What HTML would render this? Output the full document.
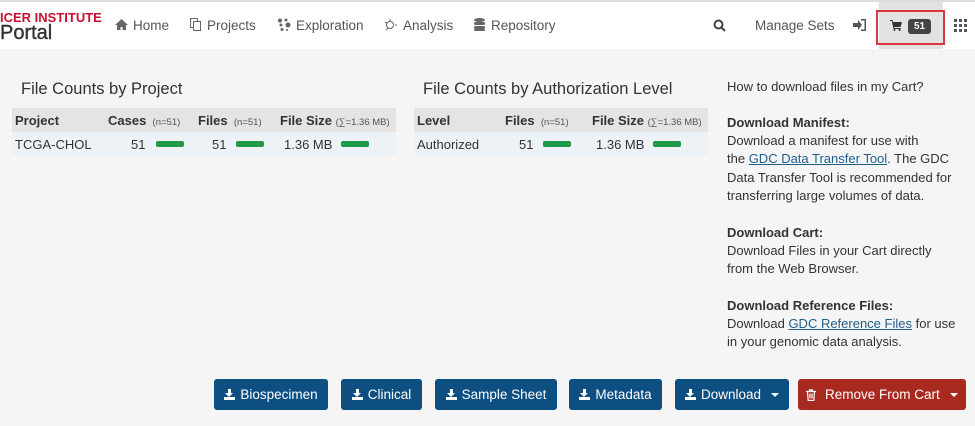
<!DOCTYPE html>
<html><head><meta charset="utf-8"><style>
*{margin:0;padding:0;box-sizing:border-box}
body{width:975px;height:426px;background:#f5f5f5;font-family:"Liberation Sans",sans-serif;position:relative;overflow:hidden;color:#333}
.a{position:absolute;white-space:nowrap}
#top{position:absolute;left:0;top:0;width:975px;height:49px;background:#fff;border-top:2px solid #ddd}
.nav{font-size:13.5px;color:#555;top:18px}
.hd{position:absolute;top:108px;height:24px;background:#e4e4e4}
.rw{position:absolute;top:132px;height:23px;background:#edf2f7}
.t{position:absolute;font-size:13px;white-space:nowrap}
.th{top:113px;font-weight:bold}
.td{top:137px}
.sm{font-size:9.5px;font-weight:normal;color:#555}
.bar{position:absolute;top:141px;width:28px;height:6px;background:#1f9a48;border-radius:2px}
.h2{font-size:16.5px;color:#333;top:80px}
.help{left:727px;font-size:13px;line-height:18.2px;color:#333;white-space:normal;width:236px}
.help a{color:#1f5f8b;text-decoration:underline}
.btn{position:absolute;top:379px;height:31px;background:#0d4f80;color:#fff;font-size:13.5px;border-radius:3px;display:flex;align-items:center;justify-content:center;gap:5px}
.dl{display:inline-block;width:11px;height:11px;position:relative}
.dl:before{content:"";position:absolute;left:4px;top:0;width:3px;height:6px;background:#fff}
.dl:after{content:"";position:absolute;left:1px;top:4px;border:4.5px solid transparent;border-top:4px solid #fff;border-bottom:0}
.dl i{position:absolute;left:0;bottom:0;width:11px;height:3px;background:#fff}
.car{display:inline-block;border:4px solid transparent;border-top:4px solid #fff;border-bottom:0;margin-left:5px}
</style></head><body>
<div id="top"></div>
<div class="a" style="left:0;top:10px;font-size:13px;font-weight:bold;color:#c8102e">ICER INSTITUTE</div>
<div class="a" style="left:0;top:22px;font-size:20px;color:#333;-webkit-text-stroke:0.4px #333">Portal</div>
<svg class="a" style="left:115px;top:19px" width="13" height="11"><path d="M6.5 0L0 6h2v5h3.5V8h2v3H11V6h2z" fill="#666"/></svg>
<div class="a nav" style="left:133px">Home</div>
<svg class="a" style="left:190px;top:18px" width="11" height="13"><rect x="0.5" y="0.5" width="7" height="9" fill="none" stroke="#666"/><rect x="3.5" y="3.5" width="7" height="9" fill="#fff" stroke="#666"/></svg>
<div class="a nav" style="left:207px">Projects</div>
<svg class="a" style="left:277px;top:18px" width="14" height="13" fill="#666"><circle cx="3" cy="2.5" r="2"/><circle cx="9" cy="2" r="1.5"/><circle cx="11" cy="7" r="2.5"/><circle cx="4" cy="7" r="1.5"/><circle cx="5" cy="11.5" r="1.5"/><circle cx="10" cy="12" r="1"/></svg>
<div class="a nav" style="left:296px">Exploration</div>
<svg class="a" style="left:384px;top:18px" width="14" height="13" fill="none" stroke="#666"><circle cx="6" cy="7" r="3.5"/><path d="M2 12l2-2M6 1v2M1 4l2 1M11 7h2"/></svg>
<div class="a nav" style="left:403px">Analysis</div>
<svg class="a" style="left:474px;top:18px" width="11" height="13" fill="#666"><ellipse cx="5.5" cy="2" rx="5.5" ry="2"/><rect x="0" y="4" width="11" height="3" rx="1.5"/><rect x="0" y="8" width="11" height="3" rx="1.5"/><rect x="0" y="11" width="11" height="2" rx="1"/></svg>
<div class="a nav" style="left:491px">Repository</div>
<svg class="a" style="left:713px;top:19px" width="13" height="13" fill="none" stroke="#444" stroke-width="2"><circle cx="5.5" cy="5.5" r="4"/><path d="M8.5 8.5l3.5 3.5"/></svg>
<div class="a nav" style="left:755px">Manage Sets</div>
<svg class="a" style="left:853px;top:19px" width="13" height="12" fill="#555"><path d="M0 4h5V1l4 5-4 5V8H0z"/><path d="M8 0h5v12H8v-1.5h3.5v-9H8z"/></svg>
<div class="a" style="left:879px;top:2px;width:64px;height:47px;background:#e2e2e2"></div>
<div class="a" style="left:876px;top:10px;width:69px;height:35px;border:2px solid #d9363e"></div>
<svg class="a" style="left:890px;top:20px" width="12" height="11" fill="#333"><path d="M0 0h2.5l.5 2H12l-1.5 5H4l.3 1H11v1H3.5L1.8 1H0z"/><circle cx="4.5" cy="10" r="1"/><circle cx="9.5" cy="10" r="1"/></svg>
<div class="a" style="left:908px;top:19px;width:23px;height:15px;background:#444;color:#fff;font-size:10px;font-weight:bold;border-radius:3px;text-align:center;line-height:15px">51</div>
<svg class="a" style="left:954px;top:19px" width="14" height="14"><g fill="#555"><rect x="0" y="0" width="3" height="3"/><rect x="5" y="0" width="3" height="3"/><rect x="10" y="0" width="3" height="3"/><rect x="0" y="5" width="3" height="3"/><rect x="5" y="5" width="3" height="3"/><rect x="10" y="5" width="3" height="3"/><rect x="0" y="10" width="3" height="3"/><rect x="5" y="10" width="3" height="3"/><rect x="10" y="10" width="3" height="3"/></g></svg>

<div class="a h2" style="left:21px">File Counts by Project</div>
<div class="a h2" style="left:423px">File Counts by Authorization Level</div>

<div class="hd" style="left:12px;width:384px"></div>
<div class="rw" style="left:12px;width:384px"></div>
<div class="t th" style="left:15px">Project</div>
<div class="t th" style="left:108px">Cases <span class="sm">&nbsp;(n=51)</span></div>
<div class="t th" style="left:198px">Files <span class="sm">&nbsp;(n=51)</span></div>
<div class="t th" style="left:280px">File Size <span class="sm">(&sum;=1.36 MB)</span></div>
<div class="t td" style="left:15px">TCGA-CHOL</div>
<div class="t td" style="left:131px">51</div><div class="bar" style="left:156px"></div>
<div class="t td" style="left:212px">51</div><div class="bar" style="left:236px"></div>
<div class="t td" style="left:284px">1.36 MB</div><div class="bar" style="left:341px"></div>

<div class="hd" style="left:414px;width:294px"></div>
<div class="rw" style="left:414px;width:294px"></div>
<div class="t th" style="left:417px">Level</div>
<div class="t th" style="left:505px">Files <span class="sm">&nbsp;(n=51)</span></div>
<div class="t th" style="left:592px">File Size <span class="sm">(&sum;=1.36 MB)</span></div>
<div class="t td" style="left:417px">Authorized</div>
<div class="t td" style="left:519px">51</div><div class="bar" style="left:543px"></div>
<div class="t td" style="left:596px">1.36 MB</div><div class="bar" style="left:653px"></div>

<div class="a help" style="top:78px">How to download files in my Cart?</div>
<div class="a help" style="top:114px"><b>Download Manifest:</b><br>Download a manifest for use with<br>the <a>GDC Data Transfer Tool</a>. The GDC Data Transfer Tool is recommended for transferring large volumes of data.</div>
<div class="a help" style="top:224px"><b>Download Cart:</b><br>Download Files in your Cart directly<br>from the Web Browser.</div>
<div class="a help" style="top:297px"><b>Download Reference Files:</b><br>Download <a>GDC Reference Files</a> for use<br>in your genomic data analysis.</div>

<div class="btn" style="left:214px;width:114px"><span class="dl"><i></i></span>Biospecimen</div>
<div class="btn" style="left:341px;width:81px"><span class="dl"><i></i></span>Clinical</div>
<div class="btn" style="left:435px;width:122px"><span class="dl"><i></i></span>Sample Sheet</div>
<div class="btn" style="left:569px;width:93px"><span class="dl"><i></i></span>Metadata</div>
<div class="btn" style="left:675px;width:114px"><span class="dl"><i></i></span>Download<span class="car"></span></div>
<div class="btn" style="left:798px;width:168px;background:#a8291f"><svg width="10" height="12" fill="none" stroke="#fff" stroke-width="1.2"><path d="M0 2.5h10M3.5 2.5V1h3v1.5M1.5 2.5l.7 9h5.6l.7-9M4 4.5v5M6 4.5v5"/></svg>&nbsp;Remove From Cart<span class="car"></span></div>
</body></html>
